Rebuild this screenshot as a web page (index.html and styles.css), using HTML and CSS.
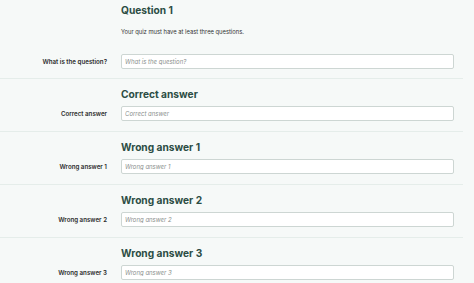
FILE: index.html
```html
<!DOCTYPE html>
<html>
<head>
	<title>Quiz</title>
	<link rel="stylesheet" href="styles.css">
</head>
<body>
<div class="quiz">

	<div class="row">
		<div class="label"></div>
		<div class="field">
			<div class="title">Question 1</div>
			<div class="hint">Your quiz must have at least three questions.</div>
		</div>
	</div>
	<div class="row row_input first_input">
		<div class="label">What is the question?</div>
		<div class="field"><input class="input" type="text" placeholder="What is the question?"></div>
	</div>

	<div class="block">
		<div class="row">
			<div class="label"></div>
			<div class="field"><div class="title">Correct answer</div></div>
		</div>
		<div class="row row_input">
			<div class="label">Correct answer</div>
			<div class="field"><input class="input" type="text" placeholder="Correct answer"></div>
		</div>
	</div>

	<div class="block">
		<div class="row">
			<div class="label"></div>
			<div class="field"><div class="title">Wrong answer 1</div></div>
		</div>
		<div class="row row_input">
			<div class="label">Wrong answer 1</div>
			<div class="field"><input class="input" type="text" placeholder="Wrong answer 1"></div>
		</div>
	</div>

	<div class="block">
		<div class="row">
			<div class="label"></div>
			<div class="field"><div class="title">Wrong answer 2</div></div>
		</div>
		<div class="row row_input">
			<div class="label">Wrong answer 2</div>
			<div class="field"><input class="input" type="text" placeholder="Wrong answer 2"></div>
		</div>
	</div>

	<div class="block">
		<div class="row">
			<div class="label"></div>
			<div class="field"><div class="title">Wrong answer 3</div></div>
		</div>
		<div class="row row_input">
			<div class="label">Wrong answer 3</div>
			<div class="field"><input class="input" type="text" placeholder="Wrong answer 3"></div>
		</div>
	</div>

</div>
</body>
</html>
```

FILE: styles.css
```css
html, body
{
	margin: 0;
	background-color: #f6f9f8;
	font-family: "Inter", "Liberation Sans", sans-serif;
}
.quiz
{
	width: 463px;
	padding-top: 4px;
}
.block
{
	border-top: 1px solid #e5edea;
	padding-top: 9px;
}
.row
{
	display: flex;
	align-items: center;
}
.label
{
	width: 107px;
	flex: none;
	text-align: right;
	font-size: 6.2px;
	font-weight: 600;
	color: #2b2b2b;
}
.field
{
	margin-left: 14px;
	flex: 1;
}
.title
{
	font-size: 10.2px;
	line-height: 12px;
	font-weight: 700;
	color: #2c4d44;
}
.hint
{
	margin-top: 12px;
	font-size: 5.8px;
	line-height: 8px;
	color: #333333;
}
.row_input
{
	margin-top: 6px;
	padding-bottom: 10px;
}
.first_input
{
	margin-top: 18px;
	padding-bottom: 9px;
}
.input
{
	display: block;
	box-sizing: border-box;
	width: 333px;
	height: 15px;
	margin: 0;
	padding: 0 3px;
	border: 1px solid #cdd6d3;
	border-radius: 2px;
	background-color: #ffffff;
	font-family: "Inter", "Liberation Sans", sans-serif;
	font-size: 6px;
	font-style: italic;
	outline: none;
}
.input::placeholder
{
	color: #8a8f8d;
}
```
